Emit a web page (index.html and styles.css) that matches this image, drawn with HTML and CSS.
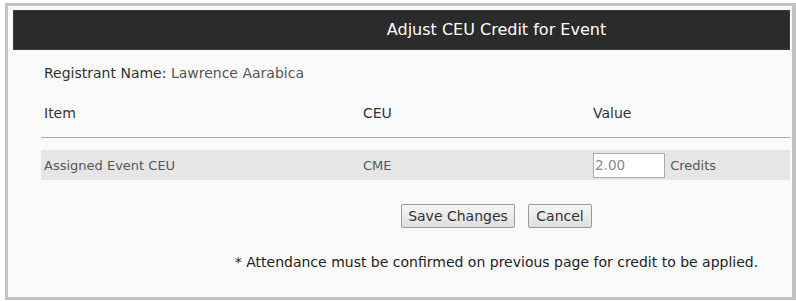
FILE: index.html
```html
<!DOCTYPE html>
<html>
<head>
<meta charset="utf-8">
<link rel="stylesheet" href="styles.css">
</head>
<body>
<div class="dialog">
  <div class="titlebar">Adjust CEU Credit for Event</div>
  <div class="content">
    <div class="registrant"><span class="label">Registrant Name:</span> Lawrence Aarabica</div>
    <table class="grid">
      <thead>
        <tr><th class="c-item">Item</th><th class="c-ceu">CEU</th><th class="c-val">Value</th></tr>
      </thead>
      <tbody>
        <tr class="row">
          <td>Assigned Event CEU</td>
          <td>CME</td>
          <td><input class="credit" type="text" value="2.00"> <span class="unit">Credits</span></td>
        </tr>
      </tbody>
    </table>
    <div class="actions">
      <button class="btn btn-save">Save Changes</button>
      <button class="btn btn-cancel">Cancel</button>
    </div>
    <div class="note">* Attendance must be confirmed on previous page for credit to be applied.</div>
  </div>
</div>
</body>
</html>
```

FILE: styles.css
```css
html, body {
  margin: 0;
  padding: 0;
  background: #ffffff;
}
body {
  font-family: "DejaVu Sans", "Open Sans", sans-serif;
  color: #333;
}
.dialog {
  margin: 3px 0 0 5px;
  height: 297px;
  box-sizing: border-box;
  border: 3px solid #c2c2c2;
  border-right-width: 4px;
  background: #fafafa;
  padding: 4px 2px 0 5px;
}
.titlebar {
  height: 40px;
  box-sizing: border-box;
  background: #2b2b2b;
  border: 1px solid #3c3c3c;
  color: #fff;
  font-size: 16px;
  line-height: 38px;
  text-align: center;
  padding-left: 190px;
}
.content {
  padding-left: 28px;
}
.registrant {
  margin-top: 15px;
  font-size: 14px;
  line-height: 16px;
  padding-left: 3px;
  color: #555;
}
.registrant .label {
  color: #333;
  font-weight: 500;
}
.grid {
  width: 100%;
  border-collapse: collapse;
  margin-top: 8px;
  font-size: 14px;
}
.grid th {
  text-align: left;
  font-weight: normal;
  color: #333;
  height: 48px;
  padding: 0 0 0 3px;
  border-bottom: 1px solid #a8a8a8;
  vertical-align: middle;
}
.grid .c-item { width: 316px; }
.grid .c-ceu { width: 227px; }
.grid tbody tr.row td {
  background: #e6e6e6;
  color: #555;
  font-size: 13px;
  height: 30px;
  padding: 0 0 0 3px;
  vertical-align: middle;
}
.grid tbody::before {
  content: "";
  display: block;
  height: 12px;
}
.credit {
  width: 72px;
  height: 25px;
  box-sizing: border-box;
  border: 1px solid #aaa;
  background: #fff;
  color: #888;
  font-family: inherit;
  font-size: 13.5px;
  padding: 0 1px;
  margin: 0;
  vertical-align: middle;
}
.unit {
  margin-left: 1px;
  vertical-align: middle;
}
.actions {
  margin-top: 24px;
  display: flex;
  justify-content: center;
  gap: 13px;
  padding-left: 190px;
  padding-right: 28px;
}
.btn {
  height: 24px;
  box-sizing: border-box;
  border: 1px solid #9a9a9a;
  border-radius: 2px;
  background: linear-gradient(#f7f7f7, #dedede);
  color: #333;
  font-family: inherit;
  font-size: 14px;
  padding: 0 4px;
  margin: 0;
  white-space: nowrap;
}
.btn-save { width: 114px; }
.btn-cancel { width: 64px; }
.note {
  margin-top: 26px;
  text-align: center;
  font-size: 14px;
  color: #222;
  padding-left: 190px;
  padding-right: 28px;
}
```
